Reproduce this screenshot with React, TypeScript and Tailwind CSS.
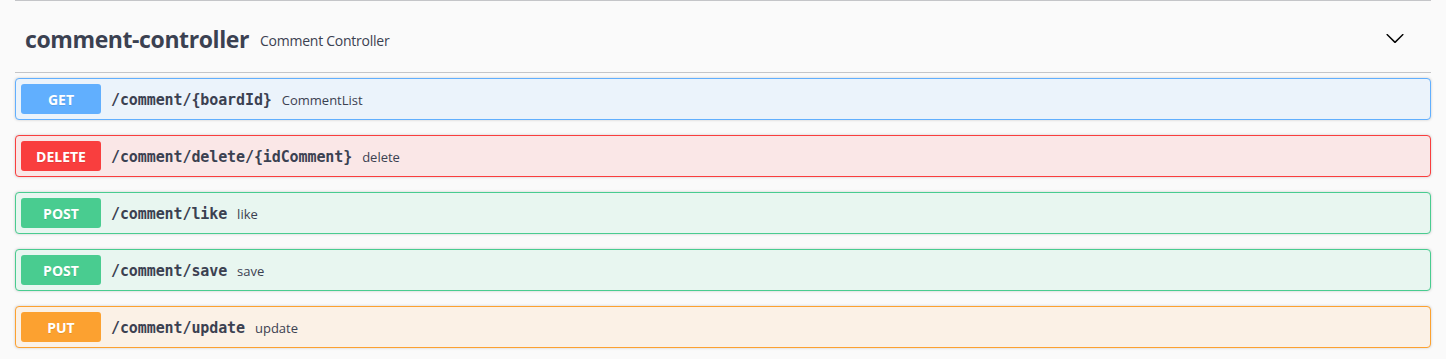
import React from 'react';

type Method = 'GET' | 'DELETE' | 'POST' | 'PUT';

const styles: Record<Method, { box: string; badge: string }> = {
  GET: { box: 'border-[#61affe] bg-[#ebf3fb]', badge: 'bg-[#61affe]' },
  DELETE: { box: 'border-[#f93e3e] bg-[#fae7e7]', badge: 'bg-[#f93e3e]' },
  POST: { box: 'border-[#49cc90] bg-[#e8f6f0]', badge: 'bg-[#49cc90]' },
  PUT: { box: 'border-[#fca130] bg-[#fbf1e6]', badge: 'bg-[#fca130]' },
};

const ops: { method: Method; path: string; summary: string }[] = [
  { method: 'GET', path: '/comment/{boardId}', summary: 'CommentList' },
  { method: 'DELETE', path: '/comment/delete/{idComment}', summary: 'delete' },
  { method: 'POST', path: '/comment/like', summary: 'like' },
  { method: 'POST', path: '/comment/save', summary: 'save' },
  { method: 'PUT', path: '/comment/update', summary: 'update' },
];

function OpBlock({ method, path, summary }: { method: Method; path: string; summary: string }) {
  const s = styles[method];
  return (
    <div className={`mb-[15px] h-[42px] rounded-[4px] border flex items-center px-[5px] shadow-[0_0_3px_rgba(0,0,0,0.19)] ${s.box}`}>
      <span
        className={`w-[80px] h-[30px] rounded-[3px] flex items-center justify-center text-white text-[14px] font-bold [text-shadow:0_1px_0_rgba(0,0,0,0.1)] ${s.badge}`}
      >
        {method}
      </span>
      <span className="px-[10px] pt-[2px] text-[15px] font-semibold text-[#3b4151] font-['DejaVu_Sans_Mono',monospace] tracking-[-0.1px]">
        {path}
      </span>
      <span className="pt-[3px] text-[13px] text-[#3b4151]">{summary}</span>
    </div>
  );
}

export default function App() {
  return (
    <div className="min-h-[359px] bg-[#fafafa] px-[15px] font-['Open_Sans',sans-serif]">
      <div className="border-t border-[#c4c5c8]" />
      <div className="h-[72px] border-b border-[#c4c5c8] flex items-center pt-[5px] pl-[10px] pr-[26px] mb-[5px]">
        <span className="text-[23px] font-bold tracking-[-0.4px] text-[#3b4151]">comment-controller</span>
        <span className="ml-[11px] pt-[3px] text-[14px] tracking-[-0.25px] text-[#3b4151]">Comment Controller</span>
        <div className="flex-1" />
        <svg width="20" height="20" viewBox="0 0 20 20" className="mt-[-3px]">
          <path
            fill="#000"
            d="M17.418 6.109c.272-.268.709-.268.979 0s.271.701 0 .969l-7.908 7.83c-.27.268-.707.268-.979 0l-7.908-7.83c-.27-.268-.27-.701 0-.969.271-.268.709-.268.979 0L10 13.25l7.418-7.141z"
          />
        </svg>
      </div>
      {ops.map((o) => (
        <OpBlock key={o.path} {...o} />
      ))}
    </div>
  );
}
